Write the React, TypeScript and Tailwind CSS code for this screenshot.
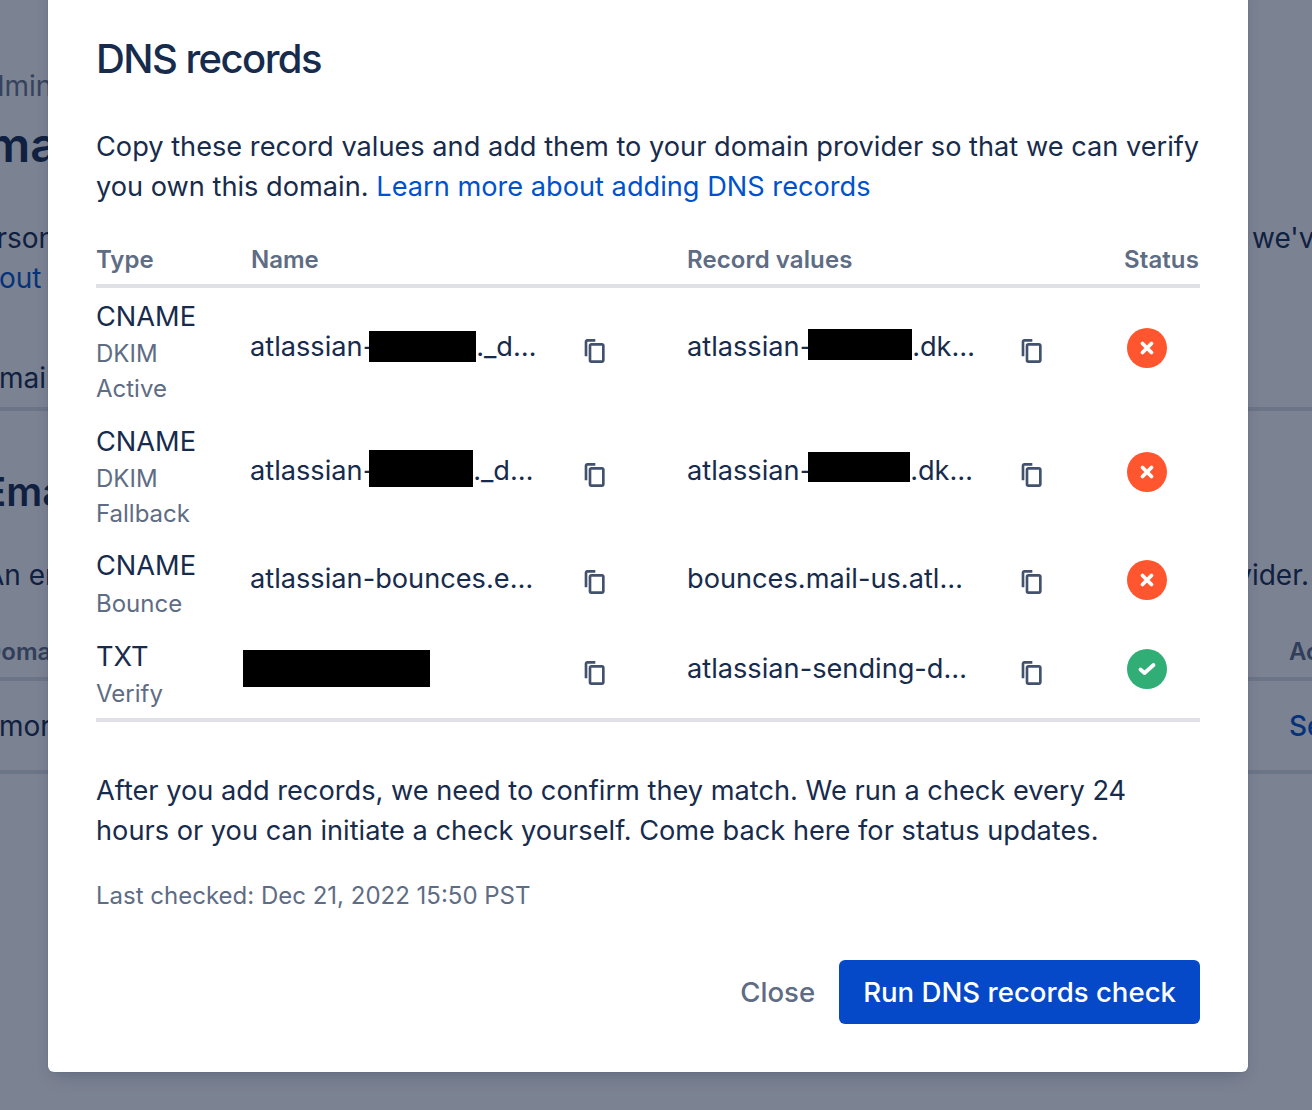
const copyPath =
  "M10 19h8V8h-8v11zM8 7.992C8 6.892 8.902 6 10.009 6h7.982C19.101 6 20 6.893 20 7.992v11.016c0 1.1-.902 1.992-2.009 1.992H10.01A2.001 2.001 0 018 19.008V7.992z"

function CopyIcon() {
  return (
    <svg width="32" height="32" viewBox="0 0 24 24" className="shrink-0">
      <path fill="#42526e" fillRule="evenodd" d={copyPath} />
      <path fill="#42526e" d="M5 16V5c0-1.1.9-2 2-2h6v2H7v11H5z" />
    </svg>
  )
}

function StatusIcon({ ok }: { ok: boolean }) {
  return (
    <svg width="40" height="40" viewBox="0 0 40 40">
      <circle cx="20" cy="20" r="20" fill={ok ? "#30ae75" : "#ff5630"} />
      {ok ? (
        <path d="M13.5 20.5l4 3.5 9-8" fill="none" stroke="#fff" strokeWidth="3.8" strokeLinecap="round" strokeLinejoin="round" />
      ) : (
        <path d="M15.5 15.5l9 9M24.5 15.5l-9 9" fill="none" stroke="#fff" strokeWidth="3.8" strokeLinecap="round" />
      )}
    </svg>
  )
}

function Redacted({ className }: { className: string }) {
  return <span className={`inline-block bg-black ${className}`} />
}

function RecordRow({
  type,
  subs,
  name,
  value,
  ok,
  pad,
  tight,
  textClass = "mb-2",
  statusClass = "mb-1",
}: {
  type: string
  subs: string[]
  name: React.ReactNode
  value: React.ReactNode
  ok: boolean
  pad: string
  tight?: boolean
  textClass?: string
  statusClass?: string
}) {
  return (
    <tr>
      <td className={`align-top ${pad}`}>
        <div>{type}</div>
        <div className={tight ? "-mt-px" : ""}>
          {subs.map((s) => (
            <div key={s} className="text-[24px] leading-[35px] text-[#5e6c84]">
              {s}
            </div>
          ))}
        </div>
      </td>
      <td className="align-middle">
        <div className="flex items-center justify-between pr-[77px]">
          <div className={`whitespace-nowrap ${textClass}`}>{name}</div>
          <CopyIcon />
        </div>
      </td>
      <td className="align-middle">
        <div className="flex items-center justify-between pr-[77px]">
          <div className={`whitespace-nowrap ${textClass}`}>{value}</div>
          <CopyIcon />
        </div>
      </td>
      <td className="align-middle">
        <div className={`ml-[3px] flex ${statusClass}`}>
          <StatusIcon ok={ok} />
        </div>
      </td>
    </tr>
  )
}

function BackgroundPage() {
  return (
    <div className="h-[1110px] overflow-hidden bg-white text-[28px] leading-[40px] text-[#172b4d]">
      <div className="h-[66px]" />
      <div className="-ml-[32px] h-[40px] text-[#6b778c]">Admin</div>
      <div className="-ml-[42px] mt-[9px] h-[60px] text-[48px] font-semibold leading-[60px]">Email</div>
      <div className="mt-[43px] flex justify-between">
        <span className="-ml-[37px]">person</span>
        <span className="w-[60px] overflow-hidden whitespace-nowrap">we've</span>
      </div>
      <div className="text-[#0052cc]">
        <span className="-ml-[1px] block">out</span>
      </div>
      <div className="mt-[60px] h-[53px] border-b-4 border-[#dfe1e6]">
        <span className="-ml-[1px] block">mail</span>
      </div>
      <div className="-ml-[18px] mt-[51px] h-[60px] text-[40px] font-semibold leading-[60px]">Email</div>
      <div className="mt-[33px] flex justify-between">
        <span className="-ml-[15px]">An email</span>
        <span className="mr-[3px]">vider.</span>
      </div>
      <div className="mt-[40px] flex h-[46px] justify-between border-b-4 border-[#dfe1e6] text-[24px] font-semibold leading-[34px] text-[#5e6c84]">
        <span className="-ml-[16px]">Domain</span>
        <span className="-mr-[8px]">Ac</span>
      </div>
      <div className="mt-[25px] flex h-[68px] justify-between border-b-4 border-[#dfe1e6]">
        <span className="-ml-[1px]">more</span>
        <span className="-mr-[28px] font-medium text-[#0052cc]">See</span>
      </div>
    </div>
  )
}

export default function App() {
  return (
    <div className="relative h-[1110px] w-[1312px] overflow-hidden font-['Inter',sans-serif]">
      <BackgroundPage />
      <div className="absolute inset-0 bg-[#0b1835]/54" />
      <div className="absolute left-[48px] top-[-20px] h-[1092px] w-[1200px] rounded-md bg-white px-[48px] pt-[49px] text-[27.2px] leading-[40px] text-[#172b4d] shadow-[0_0_1px_rgba(9,30,66,0.31),0_8px_16px_-6px_rgba(9,30,66,0.25)]">
        <h1 className="text-[40px] font-medium leading-[60px] tracking-[-1.55px]">DNS records</h1>
        <p className="mt-[38px]">
          Copy these record values and add them to your domain provider so that we can verify you own this domain.{" "}
          <a className="text-[#0052cc]">Learn more about adding DNS records</a>
        </p>
        <table className="mt-[33px] w-[1104px] table-fixed border-collapse">
          <colgroup>
            <col className="w-[154px]" />
            <col className="w-[437px]" />
            <col className="w-[437px]" />
            <col className="w-[76px]" />
          </colgroup>
          <thead>
            <tr className="border-b-4 border-[#dfe1e6] text-left text-[24px] font-semibold leading-[40px] text-[#5e6c84]">
              <th className="pb-[4px] font-semibold">Type</th>
              <th className="pb-[4px] pl-px font-semibold">Name</th>
              <th className="pb-[4px] font-semibold tracking-[0.1px]">Record values</th>
              <th className="pb-[4px] font-semibold tracking-[0.1px]">Status</th>
            </tr>
          </thead>
          <tbody className="border-b-4 border-[#dfe1e6]">
            <RecordRow
              pad="pt-[9px] pb-[7px]"
              tight
              statusClass="mb-1.5"
              type="CNAME"
              subs={["DKIM", "Active"]}
              name={
                <>
                  atlassian-<Redacted className="-ml-[6px] h-[31px] w-[107px] align-[-6px]" />._d…
                </>
              }
              value={
                <>
                  atlassian-<Redacted className="-ml-[4px] h-[31px] w-[104px] align-[-4px]" />.dk…
                </>
              }
              ok={false}
            />
            <RecordRow
              pad="pt-[9px] pb-[5px]"
              tight
              statusClass="mb-1.5"
              type="CNAME"
              subs={["DKIM", "Fallback"]}
              name={
                <>
                  atlassian-<Redacted className="-ml-[6px] h-[37px] w-[104px] align-[-7px]" />._d…
                </>
              }
              value={
                <>
                  atlassian-<Redacted className="-ml-[4px] h-[30px] w-[102px] align-[-2px]" />.dk…
                </>
              }
              ok={false}
            />
            <RecordRow
              pad="pt-[10px] pb-[6px]"
              textClass="mb-1.5"
              type="CNAME"
              subs={["Bounce"]}
              name="atlassian-bounces.e…"
              value="bounces.mail-us.atl…"
              ok={false}
            />
            <RecordRow
              pad="pt-[10px] pb-[7px]"
              tight
              statusClass="mb-2"
              type="TXT"
              subs={["Verify"]}
              name={<Redacted className="-ml-[7px] mt-[10px] block h-[37px] w-[187px]" />}
              value="atlassian-sending-d…"
              ok
            />
          </tbody>
        </table>
        <p className="mt-[49px]">
          After you add records, we need to confirm they match. We run a check every 24 hours or you can initiate a
          check yourself. Come back here for status updates.
        </p>
        <p className="mt-[27px] text-[24px] leading-[36px] text-[#5e6c84]">Last checked: Dec 21, 2022 15:50 PST</p>
        <div className="mt-[46px] flex items-center justify-end gap-6 text-[27.6px]">
          <button className="font-medium text-[#5e6c84]">Close</button>
          <button className="h-[64px] rounded-md bg-[#0549c8] px-6 font-medium text-white">Run DNS records check</button>
        </div>
      </div>
    </div>
  )
}
